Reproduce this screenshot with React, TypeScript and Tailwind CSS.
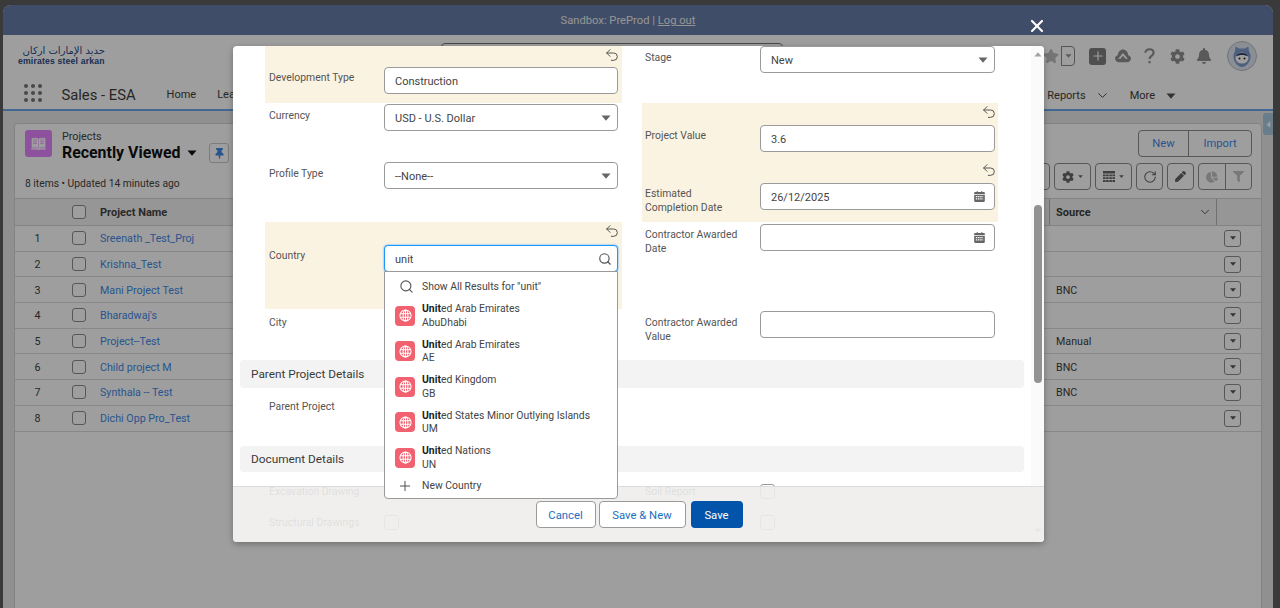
import type { ReactNode } from 'react';
import { Undo2, Search, Plus, ChevronDown, RotateCw, X } from 'lucide-react';
import { FaBell, FaChartPie, FaCog, FaFilter, FaPen, FaStar, FaThumbtack } from 'react-icons/fa';
import clsx from 'clsx';

const rows = [
  { name: 'Sreenath _Test_Proj', source: '' },
  { name: 'Krishna_Test', source: '' },
  { name: 'Mani Project Test', source: 'BNC' },
  { name: "Bharadwaj's", source: '' },
  { name: 'Project--Test', source: 'Manual' },
  { name: 'Child project M', source: 'BNC' },
  { name: 'Synthala -- Test', source: 'BNC' },
  { name: 'Dichi Opp Pro_Test', source: '' },
];

const results = [
  { rest: 'ed Arab Emirates', sub: 'AbuDhabi' },
  { rest: 'ed Arab Emirates', sub: 'AE' },
  { rest: 'ed Kingdom', sub: 'GB' },
  { rest: 'ed States Minor Outlying Islands', sub: 'UM' },
  { rest: 'ed Nations', sub: 'UN' },
];

function Caret({ className }: { className?: string }) {
  return (
    <svg viewBox="0 0 10 6" className={className} fill="currentColor">
      <path d="M0.5 0.5h9L5 5.8z" />
    </svg>
  );
}

function CalendarIcon() {
  return (
    <svg viewBox="0 0 12 12" className="h-[11px] w-[11px] text-[#666]" fill="currentColor">
      <path d="M3 0h1v1.500H3zM8 0h1v1.500H8zM1.200 1h9.600c.5 0 1 .5 1 1v1.400H.2V2c0-.5.5-1 1-1z" />
      <path
        fillRule="evenodd"
        d="M.2 4.200h11.600V11c0 .5-.5 1-1 1H1.200c-.5 0-1-.5-1-1zM2 5.500v1.400h1.600V5.500zm2.400 0v1.400H6V5.500zm2.400 0v1.400h1.600V5.500zm2.400 0v1.400H10V5.500zM2 8v1.400h1.600V8zm2.400 0v1.400H6V8zm2.400 0v1.400h1.600V8zm2.400 0v1.400H10V8z"
      />
    </svg>
  );
}

function GlobeTile() {
  return (
    <div className="flex h-[20px] w-[20px] shrink-0 items-center justify-center rounded-[4px] bg-[#f1616f]">
      <svg viewBox="0 0 14 14" className="h-[13px] w-[13px]" fill="none" stroke="#fff" strokeWidth="1.1">
        <circle cx="7" cy="7" r="6" />
        <ellipse cx="7" cy="7" rx="2.6" ry="6" />
        <path d="M7 1v12M1.4 5h11.2M1.4 9h11.2" />
      </svg>
    </div>
  );
}

function Box({ value, icon, focus }: { value?: string; icon?: 'select' | 'date' | 'search'; focus?: boolean }) {
  return (
    <div
      className={clsx(
        'flex h-[27px] items-center justify-between rounded-[4px] border bg-white pl-[10px] text-[11px] text-[#444]',
        icon === 'date' ? 'pr-[9px]' : 'pr-[6px]',
        focus ? 'border-[#1b96ff] shadow-[0_0_2px_#1b96ff]' : 'border-[#9a9a9a]',
      )}
    >
      <span className="pt-[3px]">{value}</span>
      {icon === 'select' && <Caret className="mt-px h-[6px] w-[10px] text-[#666]" />}
      {icon === 'date' && <CalendarIcon />}
      {icon === 'search' && <Search size={14} strokeWidth={2} className="-mr-px mt-px text-[#555]" />}
    </div>
  );
}

function Field({
  label,
  className,
  labelTop,
  inputTop,
  undo,
  children,
}: {
  label: ReactNode;
  className: string;
  labelTop: string;
  inputTop?: string;
  undo?: string;
  children?: ReactNode;
}) {
  return (
    <div className={clsx('flex', className)}>
      <div className={clsx('w-[115px] shrink-0 leading-[14px] text-[#555]', labelTop)}>{label}</div>
      <div className={clsx('relative flex-1', inputTop)}>
        {undo && (
          <div className={clsx('flex justify-end pt-px', undo)}>
            <Undo2 size={16} strokeWidth={1.5} className="-mr-[2px] text-[#555]" />
          </div>
        )}
        {children}
      </div>
    </div>
  );
}

function CountryResults() {
  return (
    <div className="absolute left-0 right-0 top-[49px] z-20 h-[228px] rounded-b-[4px] border border-[#9a9a9a] bg-white text-[#444]">
      <div className="flex h-[26px] items-center pl-[14px] pt-[3px]">
        <Search size={15} strokeWidth={1.8} className="mr-[8px] text-[#555]" />
        <span>Show All Results for "unit"</span>
      </div>
      {results.map((r, i) => (
        <div key={i} className="flex h-[35.5px] items-center pl-[10px]">
          <GlobeTile />
          <div className="ml-[7px] leading-[13.5px]">
            <div>
              <b className="font-bold text-[#1c1c1c]">Unit</b>
              {r.rest}
            </div>
            <div>{r.sub}</div>
          </div>
        </div>
      ))}
      <div className="flex h-[21px] items-center pl-[12px]">
        <Plus size={16} strokeWidth={1.4} className="mr-[9px] text-[#444]" />
        <span>New Country</span>
      </div>
    </div>
  );
}

function SectionBar({ title, className }: { title: string; className: string }) {
  return (
    <div className={clsx('flex w-[784px] items-center rounded-[4px] bg-[#f3f3f3] pl-[11px] pt-[2px] text-[11.8px] text-[#3a3a3a]', className)}>
      {title}
    </div>
  );
}

function Modal() {
  return (
    <div className="absolute left-[233px] top-[46px] z-50 flex h-[496px] w-[811px] overflow-hidden rounded-[4px] bg-white text-[10.4px] shadow-[0_2px_6px_rgba(0,0,0,0.3)]">
      <div className="flex-1 pl-[7px]">
        <div className="flex pl-[25px]">
          <div className="w-[357px] pl-[4px] pr-[4px]">
            <Field label="Development Type" className="-ml-[4px] -mr-[4px] h-[57px] bg-[#fbf3e2] pl-[4px] pr-[4px]" labelTop="mt-[25px]" undo="h-[21px]">
              <Box value="Construction" />
            </Field>
            <Field label="Currency" className="h-[58px]" labelTop="mt-[6px]" inputTop="pt-px">
              <Box value="USD - U.S. Dollar" icon="select" />
            </Field>
            <Field label="Profile Type" className="h-[61px]" labelTop="mt-[6px]" inputTop="pt-px">
              <Box value="--None--" icon="select" />
            </Field>
            <Field label="Country" className="-ml-[4px] -mr-[4px] h-[87px] bg-[#fbf3e2] pl-[4px] pr-[4px]" labelTop="mt-[27px]" undo="h-[23px]">
              <Box value="unit" icon="search" focus />
              <CountryResults />
            </Field>
            <Field label="City" className="h-[51px]" labelTop="mt-[7px]" inputTop="pt-[4px]">
              <Box />
            </Field>
          </div>
          <div className="ml-[20px] w-[356px] pl-[3px] pr-[3px]">
            <Field label="Stage" className="h-[57px]" labelTop="mt-[5px]">
              <Box value="New" icon="select" />
            </Field>
            <div className="-ml-[3px] -mr-[3px] bg-[#fbf3e2] pl-[3px] pr-[3px]">
              <Field label="Project Value" className="h-[58px]" labelTop="mt-[26px]" undo="h-[22px]">
                <Box value="3.6" />
              </Field>
              <Field label={<>Estimated<br />Completion Date</>} className="h-[61px]" labelTop="mt-[26px]" undo="h-[22px]">
                <Box value="26/12/2025" icon="date" />
              </Field>
            </div>
            <Field label={<>Contractor Awarded<br />Date</>} className="h-[87px]" labelTop="mt-[6px]" inputTop="pt-[2px]">
              <Box icon="date" />
            </Field>
            <Field label={<>Contractor Awarded<br />Value</>} className="h-[51px]" labelTop="mt-[7px]" inputTop="pt-[2px]">
              <Box />
            </Field>
          </div>
        </div>
        <SectionBar title="Parent Project Details" className="h-[28px]" />
        <div className="flex pl-[25px]">
          <div className="w-[357px] pl-[4px] pr-[4px]">
            <Field label="Parent Project" className="h-[58px]" labelTop="mt-[12px]" inputTop="pt-[8px]">
              <Box />
            </Field>
          </div>
        </div>
        <SectionBar title="Document Details" className="h-[26px]" />
        <div className="grid w-[733px] grid-cols-[357px_356px] gap-x-[20px] pl-[25px]">
          {[
            ['Excavation Drawing', 'Soil Report'],
            ['Structural Drawings', ''],
          ].map((pair) =>
            pair.map((label, i) => (
              <div key={label + i} className={clsx('flex h-[31px] items-start pt-[12px]', i === 0 ? 'pl-[4px]' : 'pl-[3px]')}>
                <div className="w-[115px] leading-[16px] text-[#555]">{label}</div>
                <div className="h-[15px] w-[15px] rounded-[3px] border border-[#9a9a9a] bg-white" />
              </div>
            )),
          )}
        </div>
      </div>
      {/* scrollbar */}
      <div className="flex w-[13px] flex-col items-center bg-[#fafafa] pt-[6px]">
        <Caret className="h-[5px] w-[8px] rotate-180 text-[#a3a3a3]" />
        <div className="mt-[148px] h-[178px] w-[8px] rounded-full bg-[#929292]" />
        <Caret className="mt-[145px] h-[5px] w-[8px] text-[#a3a3a3]" />
      </div>
      {/* footer */}
      <div className="absolute inset-x-0 bottom-0 z-10 flex h-[56px] items-start justify-center border-t border-[#dcdcdc] bg-[#eeedec]/90 pt-[14px] text-[11.3px]">
        <button className="ml-px h-[27px] w-[60px] rounded-[4px] border border-[#9a9a9a] bg-white pt-[3px] text-[#1b6ec2]">Cancel</button>
        <button className="ml-[3px] h-[27px] w-[87px] rounded-[4px] border border-[#9a9a9a] bg-white pt-[3px] text-[#1b6ec2]">Save &amp; New</button>
        <button className="ml-[5px] h-[27px] w-[52px] rounded-[4px] bg-[#0254ab] pt-[3px] text-white">Save</button>
      </div>
    </div>
  );
}

function TopBar() {
  return (
    <div className="flex h-[45px] items-start bg-white">
      <div className="ml-[15px] mt-[10px] w-[87px] text-[#2b4a86]">
        <div dir="rtl" className="font-['DejaVu_Sans',sans-serif] text-[10px] leading-[11px]">
          حديد الإمارات اركان
        </div>
        <div className="mt-px whitespace-nowrap font-['Liberation_Sans',sans-serif] text-[8.6px] font-bold leading-[9px] tracking-[0.2px]">
          emirates steel arkan
        </div>
      </div>
      <div className="ml-[336px] mt-[8px] h-[30px] w-[342px] rounded-[4px] border border-[#777]" />
      <div className="ml-auto flex items-center pr-[16px] pt-[6px] text-[#909090]">
        <FaStar size={16} className="mr-[2px] text-[#bdbdbd]" />
        <div className="flex h-[20px] w-[14px] items-center justify-center rounded-r-[4px] border border-[#888]">
          <Caret className="h-[4px] w-[7px]" />
        </div>
        <div className="ml-[14px] flex h-[17px] w-[17px] items-center justify-center rounded-[3px] bg-[#808080] text-white">
          <Plus size={14} strokeWidth={2} />
        </div>
        <svg viewBox="0 0 18 16" className="ml-[9px] h-[15px] w-[16px]" fill="currentColor">
          <path d="M9 0C6 0 3.600 2.600 3.200 6.200 1.400 7 0 8.400 0 10c0 2.200 2 4.600 4.300 4.600h9.400c2.300 0 4.300-2.400 4.300-4.600 0-1.600-1.400-3-3.200-3.800C14.400 2.600 12 0 9 0z" />
          <path d="M9 4.200L3.600 10.400h2.600L9 7.200l2.800 3.200h2.600z" fill="#fff" />
        </svg>
        <svg viewBox="0 0 12 18" className="ml-[13px] h-[16px] w-[11px]" fill="none" stroke="currentColor" strokeWidth="2.4">
          <path d="M1.400 5.400C1.400 3 3.400 1.400 6 1.400s4.600 1.600 4.600 4c0 3.400-4.600 3.400-4.600 7" />
          <path d="M6 14.600v2.600" />
        </svg>
        <FaCog size={15} className="ml-[15px]" />
        <FaBell size={16} className="ml-[11px]" />
        <svg viewBox="0 0 30 30" className="ml-[15px] h-[30px] w-[30px]">
          <circle cx="15" cy="15" r="14.500" fill="#dfe6f0" stroke="#bbb" />
          <path d="M8 10.500l.6-5 3.400 2h6l3.400-2 .6 5c1.400 2 1.800 4 1.400 6.500-.6 4.400-4.600 9-8.400 9s-7.800-4.600-8.400-9c-.4-2.500 0-4.500 1.400-6.500z" fill="#7f9ccc" />
          <ellipse cx="15" cy="17" rx="6.500" ry="5.500" fill="#fff" />
          <path d="M8.500 15.500c1.500-2.500 3-3.500 6.500-3.500s5 1 6.500 3.500c-3-1-4-1.500-6.500-1.500s-3.500.5-6.500 1.500z" fill="#2c3f66" />
          <circle cx="12.500" cy="17.500" r="1" fill="#222" />
          <circle cx="17.500" cy="17.500" r="1" fill="#222" />
        </svg>
      </div>
    </div>
  );
}

function AppNav() {
  return (
    <div className="flex h-[31px] items-start border-b-2 border-[#6ba6f0] bg-white text-[#3e3e3c]">
      <div className="ml-[21px] mt-[4px] grid grid-cols-3 gap-[3.2px]">
        {Array.from({ length: 9 }).map((_, i) => (
          <div key={i} className="h-[4px] w-[4px] rounded-full bg-[#777]" />
        ))}
      </div>
      <div className="ml-[19px] mt-[4px] text-[14.8px] leading-[22px]">Sales - ESA</div>
      <div className="ml-[31px] mt-[8px] text-[11px] leading-[14px]">Home</div>
      <div className="ml-[21px] mt-[8px] text-[11px] leading-[14px]">Leads</div>
      <div className="ml-auto mt-[8px] flex items-center pr-[97px] text-[11px] leading-[14px]">
        <span>Reports</span>
        <ChevronDown size={15} strokeWidth={1.5} className="ml-[9px]" />
        <span className="ml-[20px]">More</span>
        <Caret className="ml-[11px] h-[6px] w-[10px] text-[#555]" />
      </div>
    </div>
  );
}

function ToolButton({ className, children }: { className: string; children?: ReactNode }) {
  return (
    <div className={clsx('flex h-[27px] items-center justify-center rounded-[4px] border border-[#8d8d8d] bg-white text-[#666]', className)}>
      {children}
    </div>
  );
}

function CardHeader() {
  return (
    <div className="flex h-[73px] justify-between">
      <div className="pl-[10px] pt-[6px]">
        <div className="flex">
          <div className="flex h-[27px] w-[27px] items-center justify-center rounded-[3px] bg-[#e484ff]">
            <svg viewBox="0 0 18 16" className="h-[14px] w-[17px]" fill="#fff" stroke="#fff" strokeWidth="0.6">
              <path d="M1.500 1.500h6c.7 0 1 .5 1 1.200V12.500c-.4-.5-.8-.7-1.400-.7H1.500zM16.500 1.500h-6c-.7 0-1 .5-1 1.200V12.500c.4-.5.8-.7 1.400-.7h5.600z" />
              <path d="M3 3.500h4M3 5.500h4M3 7.500h4M11 3.500h4M11 5.500h4M11 7.500h4" stroke="#e484ff" strokeWidth="0.8" />
              <path d="M1 13h16v1H10l-1 1-1-1H1z" />
            </svg>
          </div>
          <div className="ml-[10px]">
            <div className="text-[10.8px] leading-[13px] text-[#444]">Projects</div>
            <div className="flex items-center text-[15.9px] font-bold leading-[20px] text-[#111]">
              Recently Viewed
              <Caret className="ml-[7px] h-[6px] w-[10px]" />
              <div className="ml-[12px] flex h-[20px] w-[20px] items-center justify-center rounded-[3px] border border-[#c9c9c9]">
                <FaThumbtack size={11} className="text-[#3f8ae8]" />
              </div>
            </div>
          </div>
        </div>
        <div className="mt-[14px] text-[10.3px] leading-[14px] text-[#444]">8 items • Updated 14 minutes ago</div>
      </div>
      <div className="flex flex-col items-end pr-[9px] pt-[6px]">
        <div className="flex h-[27px] w-[114px] rounded-[4px] border border-[#8d8d8d] bg-white pt-[2px] text-[11.2px] text-[#3f8ae8]">
          <div className="-mt-[2px] flex w-[50px] items-center justify-center border-r border-[#8d8d8d] pt-[2px]">New</div>
          <div className="flex flex-1 items-center justify-center">Import</div>
        </div>
        <div className="mt-[6px] flex gap-[4px]">
          <ToolButton className="w-[37px]" />
          <ToolButton className="w-[37px] gap-[4px]">
            <FaCog size={12} />
            <Caret className="h-[3px] w-[5px]" />
          </ToolButton>
          <ToolButton className="w-[37px] gap-[4px]">
            <svg viewBox="0 0 12 12" className="h-[12px] w-[12px]" fill="currentColor">
              <path d="M0 0h12v2.400H0zM0 3.400h2.600v1.800H0zm3.100 0h2.600v1.800H3.100zm3.200 0h2.600v1.800H6.300zm3.100 0H12v1.800H9.400zM0 6.200h2.600V8H0zm3.100 0h2.600V8H3.100zm3.200 0h2.600V8H6.300zm3.100 0H12V8H9.400zM0 9h2.600v2H0zm3.100 0h2.600v2H3.100zm3.200 0h2.600v2H6.300zm3.100 0H12v2H9.400z" />
            </svg>
            <Caret className="h-[3px] w-[5px]" />
          </ToolButton>
          <ToolButton className="w-[27px]">
            <RotateCw size={14} strokeWidth={1.8} />
          </ToolButton>
          <ToolButton className="w-[27px]">
            <FaPen size={11} />
          </ToolButton>
          <div className="flex h-[27px] w-[54px] rounded-[4px] border border-[#8d8d8d] bg-white text-[#c4c4c4]">
            <div className="flex w-[27px] items-center justify-center border-r border-[#8d8d8d]">
              <FaChartPie size={12} />
            </div>
            <div className="flex flex-1 items-center justify-center">
              <FaFilter size={11} />
            </div>
          </div>
        </div>
      </div>
    </div>
  );
}

function ProjectTable() {
  return (
    <div className="text-[10.7px] text-[#3e3e3c]">
      <div className="mt-px flex h-[28px] items-center border-y border-[#d4d4d4] bg-[#f3f3f3] text-[11px] font-bold">
        <div className="ml-[57px] h-[14px] w-[14px] rounded-[3px] border border-[#8d8d8d] bg-white" />
        <div className="ml-[14px] flex-1 pt-[2px] text-[#444]">Project Name</div>
        <div className="flex h-full w-[168px] items-center justify-between border-x border-[#b5b5b5] pl-[6px] pr-[4px]">
          <span className="pt-[2px]">Source</span>
          <ChevronDown size={14} strokeWidth={1.5} />
        </div>
        <div className="w-[44px]" />
      </div>
      {rows.map((row, i) => (
        <div key={row.name} className="flex h-[25.7px] items-center border-b border-[#dcdcdc] bg-white">
          <div className="w-[45px] pt-[2px] text-center">{i + 1}</div>
          <div className="ml-[12px] h-[14px] w-[14px] rounded-[3px] border border-[#8d8d8d] bg-white" />
          <div className="ml-[14px] flex-1 pt-[2px] text-[#3f8ae8]">{row.name}</div>
          <div className="w-[168px] pl-[8px] pt-[2px]">{row.source}</div>
          <div className="w-[45px] pl-[8px]">
            <div className="flex h-[17px] w-[17px] items-center justify-center rounded-[3px] border border-[#8d8d8d]">
              <Caret className="h-[4px] w-[8px] text-[#555]" />
            </div>
          </div>
        </div>
      ))}
    </div>
  );
}

export default function App() {
  return (
    <div className="relative h-[608px] w-[1280px] overflow-hidden bg-[#5e5e5e] pl-[3px] pr-[7px] pt-[5px] font-['Roboto',sans-serif]">
      <div className="h-[603px] overflow-hidden rounded-t-[8px] bg-[#e9e9e9]">
        <div className="flex h-[30px] items-center justify-center bg-[#687da8] pr-[20px] pt-[3px] text-[11.2px] text-[#f0f0f0]">
          Sandbox: PreProd |&nbsp;<span className="underline">Log out</span>
        </div>
        <TopBar />
        <AppNav />
        <div className="flex pl-[11px] pt-[12px]">
          <div className="h-[490px] flex-1 rounded-t-[4px] border-x border-t border-[#d4d4d4] bg-white">
            <CardHeader />
            <ProjectTable />
          </div>
          <div className="w-[11px] pl-[1px]">
            <div className="-mt-[10px] flex h-[22px] w-[10px] items-center justify-center rounded-l-[3px] bg-[#a9cde0]">
              <Caret className="h-[5px] w-[7px] rotate-90 text-white" />
            </div>
          </div>
        </div>
      </div>
      {/* backdrop */}
      <div className="absolute inset-0 z-40 bg-black/[0.38]" />
      <X size={20} strokeWidth={2.6} className="absolute left-[1027px] top-[16px] z-50 text-white" />
      <Modal />
    </div>
  );
}
